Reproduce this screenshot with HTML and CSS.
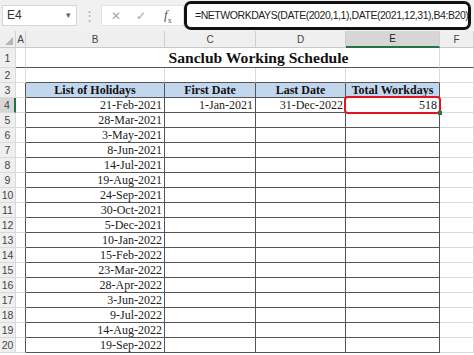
FILE: index.html
```html
<!DOCTYPE html>
<html lang="en">
<head>
    <meta charset="UTF-8">
    <title>Sanclub Working Schedule</title>
    <link rel="stylesheet" href="styles.css">
</head>
<body>
    <div class="toolbar">
        <div class="name-box">E4<span class="arrow">&#9662;</span></div>
        <div class="dots">&#8942;</div>
        <div class="fn-box">
            <span class="fn-icon">&#10005;</span>
            <span class="fn-icon">&#10003;</span>
            <span class="fx"><i>f</i><sub>x</sub></span>
        </div>
        <div class="formula">=NETWORKDAYS(DATE(2020,1,1),DATE(2021,12,31),B4:B20)</div>
    </div>

    <table class="sheet">
        <colgroup>
            <col class="c-rh"><col class="c-a"><col class="c-b"><col class="c-c"><col class="c-d"><col class="c-e"><col>
        </colgroup>
        <tr class="col-heads">
            <th class="corner"><span class="tri"></span></th>
            <th>A</th><th>B</th><th>C</th><th>D</th><th class="sel">E</th><th>F</th>
        </tr>
        <tr class="r1">
            <th class="rh">1</th>
            <td></td><td colspan="4" class="title">Sanclub Working Schedule</td><td></td>
        </tr>
        <tr>
            <th class="rh">2</th>
            <td></td><td class="above"></td><td class="above"></td><td class="above"></td><td class="above"></td><td></td>
        </tr>
        <tr>
            <th class="rh">3</th>
            <td class="edge"></td>
            <td class="t head">List of Holidays</td>
            <td class="t head">First Date</td>
            <td class="t head">Last Date</td>
            <td class="t head">Total Workdays</td>
            <td></td>
        </tr>
        <tr>
            <th class="rh sel">4</th>
            <td class="edge"></td>
            <td class="t num">21-Feb-2021</td>
            <td class="t num">1-Jan-2021</td>
            <td class="t num">31-Dec-2022</td>
            <td class="t num active">518<span class="mark"></span><span class="handle"></span></td>
            <td></td>
        </tr>
    </table>

    <script>
        var holidays = ["28-Mar-2021", "3-May-2021", "8-Jun-2021", "14-Jul-2021", "19-Aug-2021",
            "24-Sep-2021", "30-Oct-2021", "5-Dec-2021", "10-Jan-2022", "15-Feb-2022", "23-Mar-2022",
            "28-Apr-2022", "3-Jun-2022", "9-Jul-2022", "14-Aug-2022", "19-Sep-2022"];
        var sheet = document.querySelector('.sheet');
        holidays.forEach(function (day, i) {
            var row = sheet.insertRow();
            row.innerHTML = '<th class="rh">' + (i + 5) + '</th><td class="edge"></td>' +
                '<td class="t num">' + day + '</td><td class="t"></td><td class="t"></td><td class="t"></td><td></td>';
        });
    </script>
</body>
</html>
```

FILE: styles.css
```css
body {
    margin: 0;
    width: 474px;
    height: 355px;
    overflow: hidden;
    background: #ffffff;
    font-family: 'Liberation Serif', serif;
}

.toolbar {
    display: flex;
    align-items: center;
    height: 31px;
    padding: 0 3px 0 2px;
    background: #f1f1f1;
    box-sizing: border-box;
    font-family: 'Liberation Sans', sans-serif;
}

.name-box {
    position: relative;
    width: 75px;
    height: 21px;
    padding-left: 4px;
    box-sizing: border-box;
    background: #fff;
    border: 1px solid #d6d6d6;
    font-size: 12px;
    line-height: 19px;
    color: #333;
}

.arrow {
    position: absolute;
    right: 5px;
    top: 0;
    font-size: 9px;
    color: #666;
}

.dots {
    width: 24px;
    text-align: center;
    font-size: 13px;
    color: #b0b0b0;
}

.fn-box {
    display: flex;
    align-items: center;
    width: 83px;
    height: 21px;
    padding-left: 9px;
    box-sizing: border-box;
    background: #fff;
    border: 1px solid #e2e2e2;
}

.fn-icon {
    width: 25px;
    font-size: 12px;
    color: #a8a8a8;
}

.fx {
    margin-left: 3px;
    font-family: 'Liberation Serif', serif;
    font-size: 13px;
    color: #555;
}

.fx sub {
    font-size: 8px;
}

.formula {
    flex: 1;
    height: 29px;
    padding-left: 8px;
    box-sizing: border-box;
    background: #fff;
    border: 3px solid #111;
    border-radius: 7px;
    font-size: 10.5px;
    letter-spacing: -0.45px;
    line-height: 23px;
    color: #222;
    white-space: nowrap;
    overflow: hidden;
}

.sheet {
    table-layout: fixed;
    border-collapse: separate;
    border-spacing: 0;
    width: 474px;
}

.c-rh { width: 16px; }
.c-a { width: 10px; }
.c-b { width: 139px; }
.c-c { width: 91px; }
.c-d { width: 90px; }
.c-e { width: 94px; }

.sheet th,
.sheet td {
    padding: 0;
    height: 14px;
    border-right: 1px solid #dadada;
    border-bottom: 1px solid #dadada;
    white-space: nowrap;
    overflow: visible;
}

.col-heads th {
    height: 16px;
    background: #efefef;
    border-right: 1px solid #d0d0d0;
    border-bottom: 1px solid #c8c8c8;
    font-family: 'Liberation Sans', sans-serif;
    font-weight: normal;
    font-size: 10px;
    color: #444;
}

.col-heads th.sel {
    background: #d6d6d6;
    border-bottom: 2px solid #217346;
    height: 15px;
    color: #222;
}

.corner {
    position: relative;
}

.tri {
    position: absolute;
    right: 2px;
    bottom: 2px;
    border-left: 8px solid transparent;
    border-bottom: 8px solid #b5b5b5;
}

.rh {
    background: #efefef;
    font-family: 'Liberation Sans', sans-serif;
    font-weight: normal;
    font-size: 10.5px;
    color: #444;
    border-right: 1px solid #c8c8c8;
}

.rh.sel {
    background: #d6d6d6;
    border-right: 2px solid #217346;
}

.r1 td,
.r1 th {
    height: 19px;
}

.r1 td {
    border-bottom: 1px solid #555;
}

.sheet td.title {
    text-align: center;
    padding-left: 52px;
    font-weight: bold;
    font-size: 15.6px;
    color: #111;
}

.above {
    border-bottom-color: #555 !important;
}

.edge {
    border-right-color: #555 !important;
}

.sheet td.t {
    border-right: 1px solid #555;
    border-bottom: 1px solid #555;
    font-size: 12px;
    line-height: 14px;
    color: #222;
}

.sheet td.head {
    background: #c2d7ee;
    text-align: center;
    font-weight: bold;
    font-size: 12px;
    color: #111;
}

.num {
    text-align: right;
    padding-right: 2px !important;
}

.active {
    position: relative;
}

.mark {
    position: absolute;
    left: -2px;
    right: -2px;
    top: -2px;
    bottom: -2px;
    border: 2.5px solid #e3141e;
    border-radius: 4px;
}

.handle {
    position: absolute;
    right: -3px;
    bottom: -3px;
    width: 4px;
    height: 4px;
    background: #217346;
}
```
